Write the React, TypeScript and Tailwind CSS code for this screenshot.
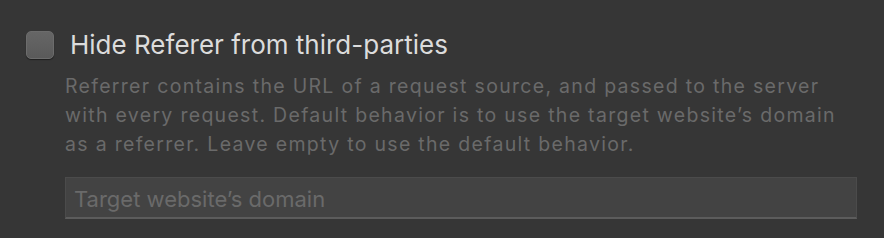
import React from 'react';

const App: React.FC = () => {
  return (
    <div
      className="w-[884px] h-[238px] bg-[#363636] overflow-hidden"
      style={{ fontFamily: 'Inter, "Noto Sans", sans-serif' }}
    >
      <div className="pt-[30px] pl-[26px]">
        <label className="flex items-center gap-[16px] h-[30px]">
          <span className="w-[28px] h-[28px] rounded-[5px] bg-gradient-to-b from-[#666666] to-[#5a5a5a] border border-[#6c6c6c] shadow-[0_1px_1px_rgba(0,0,0,0.45)]" />
          <span className="text-[26px] leading-[30px] text-[#dcdcdc]">Hide Referer from third-parties</span>
        </label>
        <div className="pl-[39px] pr-[27px]">
          <p className="mt-[12px] text-[19.5px] leading-[29px] tracking-[1.3px] text-[#6a6a6a] whitespace-nowrap">
            Referrer contains the URL of a request source, and passed to the server
            <br />
            with every request. Default behavior is to use the target website’s domain
            <br />
            as a referrer. Leave empty to use the default behavior.
          </p>
          <input
            type="text"
            placeholder="Target website’s domain"
            className="mt-[18px] block w-full h-[42px] pl-[8px] pr-[8px] pt-[3px] bg-[#434343] border border-[#4b4b4b] border-b-2 border-b-[#5c5c5c] text-[22px] text-[#dcdcdc] placeholder:text-[#6a6a6a] outline-none"
          />
        </div>
      </div>
    </div>
  );
};

export default App;
